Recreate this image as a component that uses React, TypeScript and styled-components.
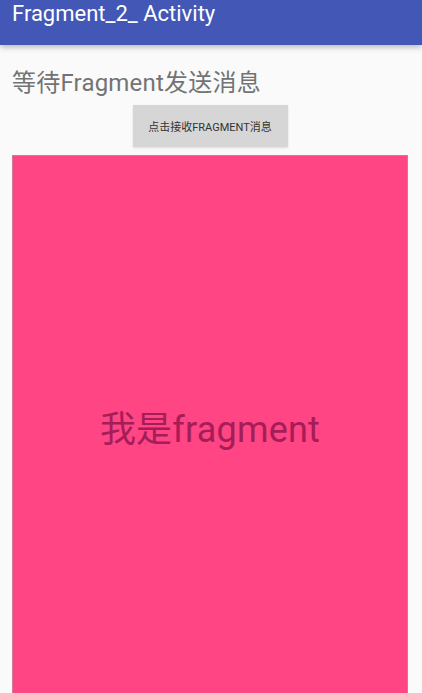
import React from "react";
import styled, { createGlobalStyle } from "styled-components";

const Global = createGlobalStyle`
  html, body {
    margin: 0;
    padding: 0;
    background: #fafafa;
    font-family: Roboto, "Noto Sans CJK SC", sans-serif;
  }
  #root {
    height: 693px;
    overflow: hidden;
  }
`;

const Screen = styled.div`
  height: 693px;
  display: flex;
  flex-direction: column;
  background: #fafafa;
`;

const AppBar = styled.header`
  height: 45px;
  flex: none;
  background: #4357b7;
  color: #fff;
  font-size: 22px;
  padding: 0 12px;
  line-height: 28px;
  box-shadow: 0 2px 6px rgba(0, 0, 0, 0.28);
  position: relative;
  z-index: 1;
`;

const Content = styled.main`
  flex: 1;
  display: flex;
  flex-direction: column;
  padding: 0 14px 0 12px;
  min-height: 0;
`;

const Status = styled.div`
  margin-top: 25px;
  font-size: 24px;
  line-height: 26px;
  color: #737373;
  letter-spacing: 0.2px;
`;

const ButtonRow = styled.div`
  display: flex;
  justify-content: center;
  margin-top: 9px;
`;

const Button = styled.button`
  width: 155px;
  height: 42px;
  border: none;
  background: #d6d6d6;
  color: #333;
  font-family: Roboto, "Noto Sans CJK SC", sans-serif;
  font-size: 11px;
  padding: 0;
  box-shadow: 0 1px 2px rgba(0, 0, 0, 0.12);
`;

const FragmentPanel = styled.section`
  margin-top: 8px;
  flex: 1;
  background: #ff4583;
  border: 1px solid #d07a9a;
  border-bottom: none;
  display: flex;
  align-items: center;
  justify-content: center;
  padding-top: 2px;
`;

const FragmentText = styled.div`
  font-size: 36px;
  color: #a51d58;
  letter-spacing: 0.2px;
`;

export default function App() {
  return (
    <>
      <Global />
      <Screen>
        <AppBar>Fragment_2_ Activity</AppBar>
        <Content>
          <Status>等待Fragment发送消息</Status>
          <ButtonRow>
            <Button>点击接收FRAGMENT消息</Button>
          </ButtonRow>
          <FragmentPanel>
            <FragmentText>我是fragment</FragmentText>
          </FragmentPanel>
        </Content>
      </Screen>
    </>
  );
}
